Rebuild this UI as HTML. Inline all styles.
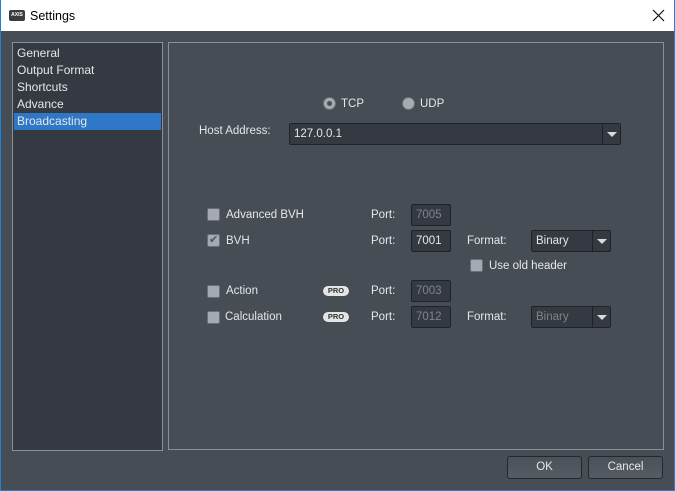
<!DOCTYPE html>
<html><head><style>
*{box-sizing:border-box;margin:0;padding:0}
body{width:675px;height:491px;overflow:hidden;font-family:"Liberation Sans",sans-serif;font-size:11.5px;background:#1883d7;position:relative}
.win{position:absolute;left:1px;top:0;width:673px;height:490px;background:#474d55}
.title{position:absolute;left:0;top:0;width:673px;height:31px;background:#fff;color:#000}
.title .t{position:absolute;left:29px;top:9px;font-size:12.5px}
.logo{position:absolute;left:8px;top:10px;width:16px;height:11px;background:#3c3c3c;border-radius:2px;color:#fff;font-size:5px;text-align:center;line-height:11px;font-weight:bold}
.x{position:absolute;left:651px;top:9px}
.a{position:absolute;color:#e6e7e9;padding-top:1px}
.lp{position:absolute;left:11px;top:42px;width:151px;height:409px;background:#353941;border:1px solid #8c9096;padding-top:2px}
.lp div{height:17px;line-height:17px;padding-left:4px;color:#e6e7e9;font-size:12px}
.lp .sel{background:#2f77c7;margin:0 1px;padding-left:3px}
.rp{position:absolute;left:167px;top:42px;width:496px;height:408px;border:1px solid #8c9096}
.radio{position:absolute;width:13px;height:13px;border-radius:50%;background:#a7acb3;border:1px solid #6b7078}
.cb{position:absolute;width:13px;height:13px;border-radius:2px;background:#a5aab2;border:1px solid #6b7078}
.in{position:absolute;background:#353941;border:1px solid #1f2226;border-radius:2px;color:#e6e7e9;padding-left:4px;line-height:21px}
.dis{color:#7f848b}
.pro{position:absolute;width:26px;height:10px;background:#e5e5e5;border-radius:5px;color:#333;font-size:7.5px;font-weight:bold;text-align:center;line-height:10px}
.dd{position:absolute;right:0;top:0;width:18px;height:100%;border-left:1px solid #1f2226}
.dd:after{content:"";position:absolute;left:4px;top:8px;border:5px solid transparent;border-top:5px solid #d8dadd;border-bottom:0}
.btn{position:absolute;width:75px;height:23px;border:1px solid #24272b;border-radius:3px;background:linear-gradient(#4b5159,#565c64);color:#e6e7e9;text-align:center;line-height:21px}
</style></head><body>
<div class="win">
<div class="title"><div class="logo">AXIS</div><div class="t">Settings</div><svg class="x" width="13" height="13" viewBox="0 0 13 13"><path d="M1 1L12 12M12 1L1 12" stroke="#111" stroke-width="1.2"/></svg></div>
<div class="lp"><div>General</div><div>Output Format</div><div>Shortcuts</div><div>Advance</div><div class="sel">Broadcasting</div></div>
<div class="rp"></div>
<div class="radio" style="left:322px;top:97px"><div style="position:absolute;left:3px;top:3px;width:5px;height:5px;border-radius:50%;background:#4a4f56"></div></div>
<div class="a" style="left:340px;top:97px">TCP</div>
<div class="radio" style="left:401px;top:97px"></div>
<div class="a" style="left:419px;top:97px">UDP</div>
<div class="a" style="left:198px;top:124px">Host Address:</div>
<div class="in" style="left:288px;top:123px;width:332px;height:22px">127.0.0.1<div class="dd"></div></div>

<div class="cb" style="left:206px;top:208px"></div><div class="a" style="left:225px;top:208px">Advanced BVH</div>
<div class="a" style="left:370px;top:208px">Port:</div>
<div class="in dis" style="left:410px;top:204px;width:40px;height:22px">7005</div>

<div class="cb" style="left:206px;top:234px"><span style="position:absolute;left:1px;top:-2px;font-size:11px;color:#555">✔</span></div><div class="a" style="left:225px;top:234px">BVH</div>
<div class="a" style="left:370px;top:234px">Port:</div>
<div class="in" style="left:410px;top:230px;width:40px;height:22px">7001</div>
<div class="a" style="left:466px;top:234px">Format:</div>
<div class="in" style="left:530px;top:230px;width:80px;height:22px">Binary<div class="dd"></div></div>
<div class="cb" style="left:469px;top:259px"></div><div class="a" style="left:488px;top:259px">Use old header</div>

<div class="cb" style="left:206px;top:285px"></div><div class="a" style="left:225px;top:284px">Action</div>
<div class="pro" style="left:322px;top:286px">PRO</div>
<div class="a" style="left:370px;top:284px">Port:</div>
<div class="in dis" style="left:410px;top:280px;width:40px;height:22px">7003</div>

<div class="cb" style="left:206px;top:311px"></div><div class="a" style="left:224px;top:310px">Calculation</div>
<div class="pro" style="left:322px;top:312px">PRO</div>
<div class="a" style="left:370px;top:310px">Port:</div>
<div class="in dis" style="left:410px;top:306px;width:40px;height:22px">7012</div>
<div class="a" style="left:466px;top:310px">Format:</div>
<div class="in dis" style="left:530px;top:306px;width:80px;height:22px">Binary<div class="dd"></div></div>

<div class="btn" style="left:506px;top:456px">OK</div>
<div class="btn" style="left:587px;top:456px">Cancel</div>
</div>
</body></html>
